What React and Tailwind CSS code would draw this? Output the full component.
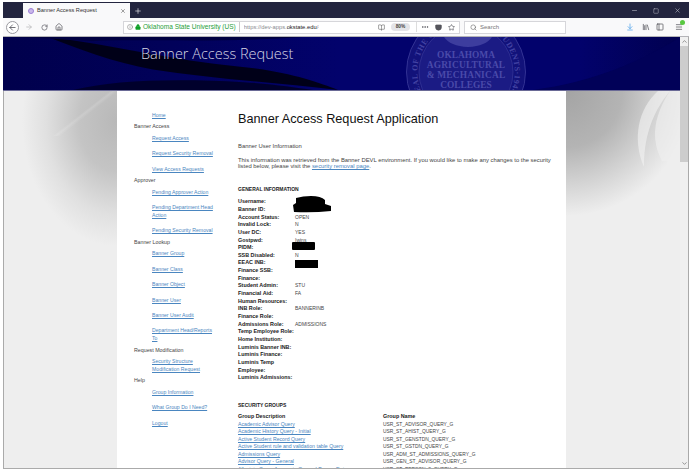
import React from "react";
import { ArrowLeft, ArrowRight, RotateCw, Home, Info, Lock, MoreHorizontal, Star, Search, ArrowDownToLine, Library, PanelLeft, Menu, X, Plus, Minus, Square, ChevronUp, ChevronDown, BookOpen, Pocket } from "lucide-react";

const SIDEBAR = [
  { link: ["Home"] },
  { label: "Banner Access" },
  { link: ["Request Access"] },
  { link: ["Request Security Removal"] },
  { link: ["View Access Requests"] },
  { label: "Approver" },
  { link: ["Pending Approver Action"] },
  { link: ["Pending Department Head", "Action"] },
  { link: ["Pending Security Removal"] },
  { label: "Banner Lookup" },
  { link: ["Banner Group"] },
  { link: ["Banner Class"] },
  { link: ["Banner Object"] },
  { link: ["Banner User"] },
  { link: ["Banner User Audit"] },
  { link: ["Department Head/Reports", "To"] },
  { label: "Request Modification" },
  { link: ["Security Structure", "Modification Request"] },
  { label: "Help" },
  { link: ["Group Information"] },
  { link: ["What Group Do I Need?"] },
  { link: ["Logout"] },
];

const GENERAL = [
  ["Username:", ""],
  ["Banner ID:", ""],
  ["Account Status:", "OPEN"],
  ["Invalid Lock:", "N"],
  ["User DC:", "YES"],
  ["Gostpwd:", "Iwins"],
  ["PIDM:", ""],
  ["SSB Disabled:", "N"],
  ["EEAC INB:", ""],
  ["Finance SSB:", ""],
  ["Finance:", ""],
  ["Student Admin:", "STU"],
  ["Financial Aid:", "FA"],
  ["Human Resources:", ""],
  ["INB Role:", "BANNERINB"],
  ["Finance Role:", ""],
  ["Admissions Role:", "ADMISSIONS"],
  ["Temp Employee Role:", ""],
  ["Home Institution:", ""],
  ["Luminis Banner INB:", ""],
  ["Luminis Finance:", ""],
  ["Luminis Temp", ""],
  ["Employee:", ""],
  ["Luminis Admissions:", ""],
];

const GROUPS = [
  ["Academic Advisor Query", "USR_ST_ADVISOR_QUERY_G"],
  ["Academic History Query - Initial", "USR_ST_AHIST_QUERY_G"],
  ["Active Student Record Query", "USR_ST_GENSTDN_QUERY_G"],
  ["Active Student rule and validation table Query", "USR_ST_GSTDN_QUERY_G"],
  ["Admissions Query", "USR_ADM_ST_ADMISSIONS_QUERY_G"],
  ["Advisor Query - General", "USR_GEN_ST_ADVISOR_QUERY_G"],
  ["Alleviate Query Access to General Person Data", "USR_ST_PERSON_2_QUERY_G"],
];

// barra de título + barra de navegação do Firefox
const BrowserChrome = () => (
  <>
    <div className="flex h-[16px] items-end bg-[#23253f]">
      <div className="w-[20px]" />
      <div className="flex h-[15px] w-[107px] items-center bg-[#f9f9fa] pl-[5px] pr-[4px]">
        <span className="h-[6px] w-[6px] rounded-full border border-[#9d7fd6] bg-[#c9b8ea]" />
        <span className="ml-[3px] flex-1 text-[5.6px] text-[#333]">Banner Access Request</span>
        <X size={6} className="text-[#444]" />
      </div>
      <Plus size={8} className="ml-[4px] mb-[3px] text-[#e4e4e8]" />
      <div className="flex-1" />
      <div className="mb-[4px] flex items-center gap-[15px] pr-[8px] text-[#b8bac6]">
        <Minus size={7} />
        <Square size={6} />
        <X size={7} />
      </div>
    </div>
    <div className="flex h-[19px] items-center border-b border-[#b4b4b8] bg-[#f9f9fa] text-[#45454d]">
      <div className="ml-[3px] flex h-[13px] w-[13px] items-center justify-center rounded-full border border-[#9a9aa0] bg-white">
        <ArrowLeft size={9} />
      </div>
      <ArrowRight size={8} className="ml-[6px] text-[#b0b0b4]" />
      <RotateCw size={7} className="ml-[8px]" />
      <Home size={8} className="ml-[7px]" />
      <div className="ml-[60px] flex h-[13px] w-[337px] items-center border border-[#d6d6da] bg-white pl-[3px] pr-[4px]">
        <Info size={6} className="text-[#777]" />
        <Lock size={6} className="ml-[2px] text-[#12a12a]" fill="currentColor" />
        <span className="ml-[2px] whitespace-nowrap text-[6.55px] text-[#1f9e3a]">Oklahoma State University (US)</span>
        <span className="ml-[3px] h-[10px] border-l border-[#ccc]" />
        <span className="ml-[4px] w-[75px] overflow-hidden whitespace-nowrap text-[5.8px] text-[#8a8a90]">
          https://dev-apps.<span className="text-[#222]">okstate.edu</span>/~allen/cgi
        </span>
        <span className="flex-1" />
        <BookOpen size={7} className="text-[#666]" />
        <span className="ml-[6px] w-[19px] rounded-full bg-[#e4e4e8] text-center text-[4.8px] font-bold leading-[8px] text-[#444]">80%</span>
        <span className="ml-[6px] h-[10px] border-l border-[#ddd]" />
        <MoreHorizontal size={8} className="ml-[4px]" />
        <Pocket size={7} className="ml-[6px] text-[#55555c]" fill="currentColor" />
        <Star size={7} className="ml-[6px]" />
      </div>
      <div className="ml-[4px] flex h-[13px] w-[102px] items-center border border-[#d6d6da] bg-white pl-[5px]">
        <Search size={7} className="text-[#666]" />
        <span className="ml-[3px] text-[6px] text-[#777]">Search</span>
      </div>
      <ArrowDownToLine size={8} className="ml-[60px] text-[#3f9bea]" />
      <Library size={8} className="ml-[8px]" />
      <PanelLeft size={8} className="ml-[6px]" />
      <div className="relative ml-[11px]">
        <Menu size={8} />
        <span className="absolute -right-[2px] -top-[3px] h-[5px] w-[5px] rounded-full bg-[#58c840]" />
      </div>
    </div>
  </>
);

const Seal = () => (
  <svg viewBox="0 0 120 54" className="h-[54px] w-[120px]">
    <defs>
      <path id="ringL" d="M 17 58 A 49 49 0 0 1 60 -14" />
      <path id="ringR" d="M 60 -14 A 49 49 0 0 1 103 58" />
    </defs>
    <circle cx="60" cy="35" r="59.5" fill="#12127a" stroke="#3c3c9c" strokeWidth="0.8" />
    <circle cx="60" cy="35" r="47" fill="#1b1b84" stroke="#3c3c9c" strokeWidth="0.6" />
    <text fill="#4343a4" fontFamily="Liberation Serif" fontSize="8" fontWeight="700" letterSpacing="0.5">
      <textPath href="#ringL">SEAL OF THE OKLAHOMA</textPath>
    </text>
    <text fill="#4343a4" fontFamily="Liberation Serif" fontSize="8" fontWeight="700" letterSpacing="0.5" textAnchor="end">
      <textPath href="#ringR" startOffset="100%">STUDENTS·1944·</textPath>
    </text>
    <path d="M38 0 H86 Q80 9 62 10 Q44 9 38 0 Z" fill="#3d3d9e" />
    <g fill="#4a4aaa" fontFamily="Liberation Serif" fontWeight="700" textAnchor="middle">
      <text x="60" y="21" fontSize="9.4">OKLAHOMA</text>
      <text x="60" y="31" fontSize="9.4" letterSpacing="0.2">AGRICULTURAL</text>
      <text x="60" y="41" fontSize="9.4" letterSpacing="0.2">&amp; MECHANICAL</text>
      <text x="60" y="51" fontSize="9.4">COLLEGES</text>
    </g>
  </svg>
);

const Banner = () => (
  <div className="relative h-[54px] overflow-hidden border-b border-[#6a6a96] bg-[linear-gradient(90deg,#00004c_0%,#01015a_25%,#02026c_50%,#02026c_85%,#010150_100%)]">
    <svg viewBox="0 0 677 54" preserveAspectRatio="none" className="absolute inset-0 h-full w-full">
      <path d="M45 0 C110 8 170 24 235 30 C285 35 315 46 335 54 C270 46 205 42 150 33 C110 26 75 12 45 0 Z" fill="#000018" />
      <path d="M70 54 C110 44 170 42 240 46 C270 48 290 51 310 54 Z" fill="#00002c" />
      <path d="M0 0 H300 C220 6 150 2 90 4 C50 2 20 0 0 0 Z" fill="#000040" />
      <path d="M530 54 C590 46 640 24 677 0 V54 Z" fill="#010158" />
    </svg>
    <span className="absolute left-[138px] top-[6px] font-['Open_Sans'] text-[14.5px] font-light text-[#d6d6e4]">Banner Access Request</span>
    <div className="absolute left-[403px] top-0">
      <Seal />
    </div>
  </div>
);

const Sidebar = () => (
  <div className="w-[121px] pl-[17px] pt-[17px] text-[5.3px] leading-[7.65px] text-[#444]">
    {SIDEBAR.map((it, i) =>
      it.label ? (
        <div key={i} className="h-[7.65px]">{it.label}</div>
      ) : (
        <div key={i} className="mb-[3.75px] pl-[18px] pt-[4px] text-[5.15px] text-[#4a86c0] underline">
          {it.link.map((l) => (
            <div key={l}>{l}</div>
          ))}
        </div>
      )
    )}
  </div>
);

const Content = () => (
  <div className="relative flex-1 text-[5.4px] leading-[7.65px] text-[#444]">
    <h1 className="mt-[20.5px] h-[15px] text-[12.7px] font-normal leading-[15px] text-[#111]">Banner Access Request Application</h1>
    <p className="mt-[16.5px] text-[5.87px]">Banner User Information</p>
    <p className="mt-[6px] text-[5.87px] leading-[6.2px]">
      This information was retrieved from the Banner DEVL environment. If you would like to make any changes to the security<br />
      listed below, please visit the <a className="text-[#4a86c0] underline">security removal page</a>.
    </p>
    <h2 className="mt-[16.5px] text-[5px] font-bold text-[#222]">GENERAL INFORMATION</h2>
    <div className="mt-[5px] grid grid-cols-[57px_1fr]">
      {GENERAL.map(([k, v], i) => (
        <React.Fragment key={i}>
          <div className="whitespace-nowrap font-bold text-[#222]">{k}</div>
          <div className="text-[5px]">{v}</div>
        </React.Fragment>
      ))}
    </div>
    <h2 className="mt-[20px] text-[5px] font-bold text-[#222]">SECURITY GROUPS</h2>
    <div className="mt-[3.5px] grid grid-cols-[145px_1fr] leading-[7.55px]">
      <div className="font-bold text-[#222]">Group Description</div>
      <div className="font-bold text-[#222]">Group Name</div>
      {GROUPS.map(([d, n]) => (
        <React.Fragment key={n}>
          <a className="whitespace-nowrap text-[5.2px] text-[#4a86c0] underline">{d}</a>
          <div className="text-[4.88px]">{n}</div>
        </React.Fragment>
      ))}
    </div>
    {/* blocos pretos de censura por cima dos valores */}
    <svg viewBox="0 0 38 17" className="absolute left-[55px] top-[105px] h-[17px] w-[38px]">
      <path d="M3 2 Q10 0 18 0 Q28 0 32 4 L32 8 L38 10 L38 15 Q20 17 1 16 L0 9 L3 7 Z" fill="#000" />
    </svg>
    <div className="absolute left-[54px] top-[151px] h-[8px] w-[23px] rounded-[1px] bg-black" />
    <div className="absolute left-[57px] top-[169px] h-[8px] w-[23px] bg-black" />
  </div>
);

const Scrollbar = () => (
  <div className="flex w-[9px] flex-col border-r border-[#aaa] bg-[#f0f0f0]">
    <div className="flex h-[9px] items-center justify-center">
      <ChevronUp size={7} className="text-[#555]" />
    </div>
    <div className="h-[116px] bg-[#cdcdcd]" />
    <div className="flex-1" />
    <div className="flex h-[9px] items-center justify-center">
      <ChevronDown size={7} className="text-[#555]" />
    </div>
  </div>
);

export default function App() {
  return (
    <div className="flex h-[474px] w-[693px] flex-col overflow-hidden bg-white pb-[5px] pl-[3px] pr-[4px] pt-[2px] font-['Liberation_Sans',sans-serif]">
      <BrowserChrome />
      <div className="flex min-h-0 flex-1 border-b border-[#aaa]">
        <div className="flex min-w-0 flex-1 flex-col">
          <Banner />
          <div className="flex min-h-0 flex-1 overflow-hidden border-l border-[#aaa] bg-[#eeeeee]">
            <div className="w-[113px] bg-[linear-gradient(142deg,#ffffff00_62%,#ffffff26_64%,#ffffff00_67%),radial-gradient(ellipse_95px_125px_at_100%_8%,#b8b8b8_0%,#c4c4c4_40%,#e0e0e0_75%,#eeeeee00_100%)] bg-[length:113px_45px,auto] bg-no-repeat" />
            <div className="flex w-[449px] bg-white">
              <Sidebar />
              <Content />
            </div>
            <div className="relative flex-1 bg-[radial-gradient(ellipse_125px_125px_at_0%_0%,#a4a4a4_0%,#b4b4b4_45%,#d4d4d4_75%,#eeeeee00_100%)]">
              <svg viewBox="0 0 114 80" className="absolute left-0 top-0 h-[80px] w-[114px]">
                <path d="M92 0 C72 18 66 48 78 76 C78 50 84 24 104 0 Z" fill="#f4f4f4" opacity="0.6" />
                <path d="M104 0 C88 24 84 48 96 70 L114 70 V0 Z" fill="#eeeeee" opacity="0.7" />
              </svg>
            </div>
          </div>
        </div>
        <Scrollbar />
      </div>
    </div>
  );
}
